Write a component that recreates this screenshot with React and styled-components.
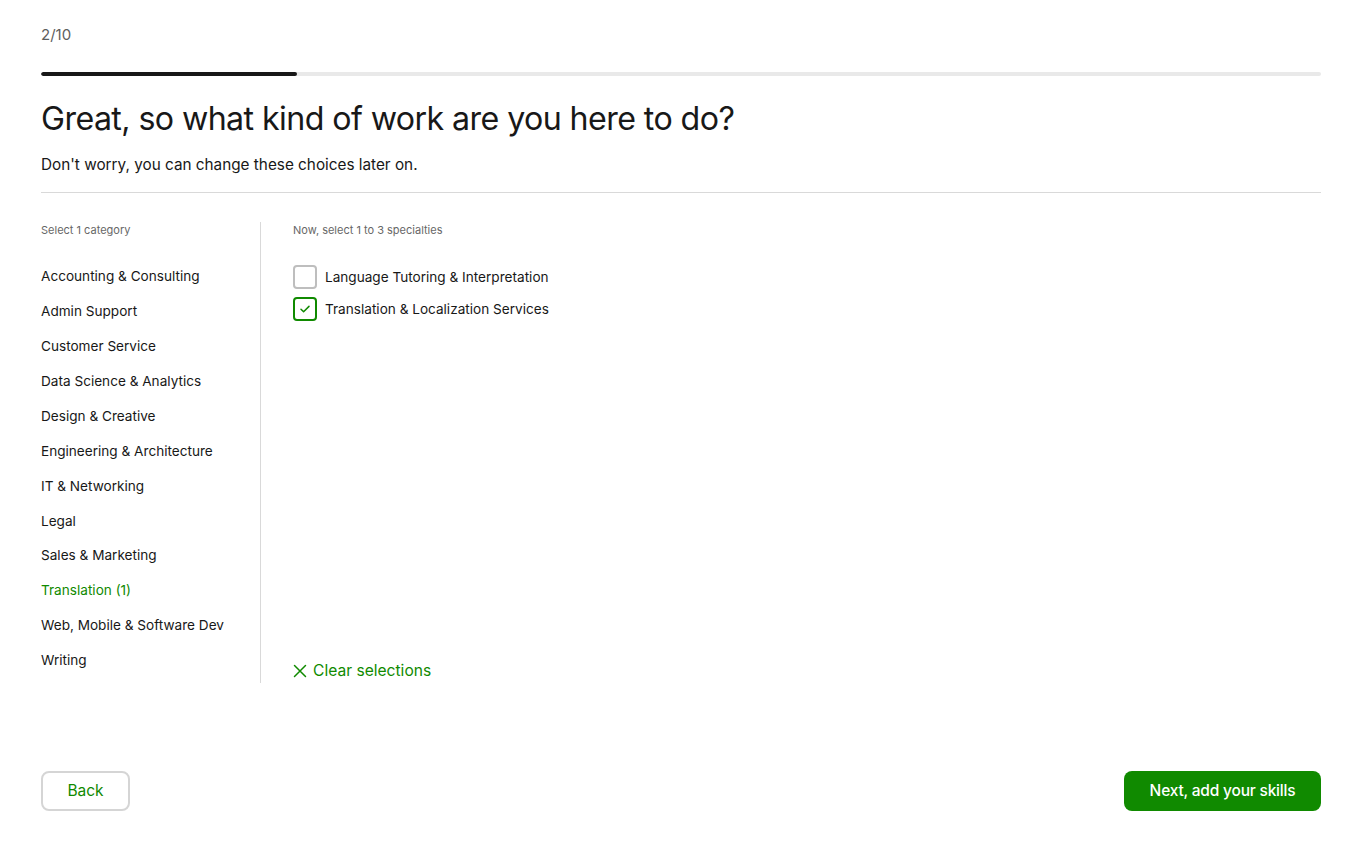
import React from 'react'
import styled, { createGlobalStyle } from 'styled-components'

const GlobalStyle = createGlobalStyle`
  body {
    margin: 0;
    background: #fff;
    font-family: Inter, "Noto Sans", sans-serif;
    color: #181818;
  }
`

const categorias = [
  'Accounting & Consulting',
  'Admin Support',
  'Customer Service',
  'Data Science & Analytics',
  'Design & Creative',
  'Engineering & Architecture',
  'IT & Networking',
  'Legal',
  'Sales & Marketing',
  'Translation (1)',
  'Web, Mobile & Software Dev',
  'Writing',
]

const especialidades = [
  { nome: 'Language Tutoring & Interpretation', marcado: false },
  { nome: 'Translation & Localization Services', marcado: true },
]

function App() {
  return (
    <Page>
      <GlobalStyle />
      <Step>2/10</Step>
      <Progress>
        <ProgressFill style={{ width: '20%' }} />
      </Progress>
      <Title>Great, so what kind of work are you here to do?</Title>
      <Subtitle>Don't worry, you can change these choices later on.</Subtitle>
      <Divider />

      <Columns>
        <LeftCol>
          <SmallLabel>Select 1 category</SmallLabel>
          <CategoryList>
            {categorias.map((c) => (
              <Category key={c} $active={c.startsWith('Translation')}>{c}</Category>
            ))}
          </CategoryList>
        </LeftCol>

        <RightCol>
          <SmallLabel>Now, select 1 to 3 specialties</SmallLabel>
          <SpecialtyList>
            {especialidades.map((e) => (
              <Specialty key={e.nome}>
                <Box $checked={e.marcado}>
                  {e.marcado && (
                    <svg width="12" height="12" viewBox="0 0 12 12" fill="none">
                      <path d="M2 6.3l2.6 2.5L10 3.4" stroke="#108a00" strokeWidth="1.5" strokeLinecap="round" strokeLinejoin="round" />
                    </svg>
                  )}
                </Box>
                {e.nome}
              </Specialty>
            ))}
          </SpecialtyList>
          <ClearLink>
            <svg width="14" height="14" viewBox="0 0 14 14" fill="none">
              <path d="M1.5 1.5l11 11M12.5 1.5l-11 11" stroke="#108a00" strokeWidth="1.5" strokeLinecap="round" />
            </svg>
            Clear selections
          </ClearLink>
        </RightCol>
      </Columns>

      <Footer>
        <BackButton>Back</BackButton>
        <NextButton>Next, add your skills</NextButton>
      </Footer>
    </Page>
  )
}

export default App

const Page = styled.div`
  padding: 25px 38px 0 41px;
`

const Step = styled.div`
  font-size: 15px;
  color: #5e5e5e;
  line-height: 20px;
`

const Progress = styled.div`
  margin-top: 27px;
  height: 4px;
  border-radius: 2px;
  background: #e9e9e9;
  overflow: hidden;
`

const ProgressFill = styled.div`
  height: 100%;
  background: #181818;
  border-radius: 2px;
`

const Title = styled.h1`
  margin: 21px 0 0;
  font-size: 32.2px;
  font-weight: 400;
  letter-spacing: -0.6px;
  line-height: 44px;
`

const Subtitle = styled.p`
  margin: 13px 0 0;
  font-size: 15.3px;
  line-height: 22px;
`

const Divider = styled.div`
  margin-top: 16px;
  height: 1px;
  background: #d9d9d9;
`

const Columns = styled.div`
  display: flex;
  margin-top: 29px;
`

const LeftCol = styled.div`
  width: 219px;
  flex-shrink: 0;
  border-right: 1px solid #d9d9d9;
  display: flex;
  flex-direction: column;
`

const SmallLabel = styled.div`
  font-size: 11px;
  color: #676767;
  line-height: 16px;
`

const CategoryList = styled.div`
  display: flex;
  flex-direction: column;
  margin-top: 21px;
  padding-bottom: 5px;
`

const Category = styled.div`
  font-size: 13.6px;
  line-height: 20px;
  padding: 7.45px 0;
  color: ${(p) => (p.$active ? '#108a00' : '#181818')};
  cursor: pointer;
`

const RightCol = styled.div`
  flex: 1;
  padding-left: 32px;
  display: flex;
  flex-direction: column;
`

const SpecialtyList = styled.div`
  display: flex;
  flex-direction: column;
  gap: 8px;
  margin-top: 27px;
`

const Specialty = styled.label`
  display: flex;
  align-items: center;
  gap: 8px;
  font-size: 13.6px;
  line-height: 24px;
  cursor: pointer;
`

const Box = styled.span`
  box-sizing: border-box;
  width: 24px;
  height: 24px;
  border-radius: 4px;
  border: 2px solid ${(p) => (p.$checked ? '#108a00' : '#bebebe')};
  display: flex;
  align-items: center;
  justify-content: center;
`

const ClearLink = styled.div`
  margin-top: auto;
  margin-bottom: 2px;
  display: flex;
  align-items: center;
  gap: 6px;
  color: #108a00;
  font-size: 15.6px;
  line-height: 20px;
  cursor: pointer;
`

const Footer = styled.div`
  display: flex;
  justify-content: space-between;
  margin-top: 88px;
`

const BackButton = styled.button`
  box-sizing: border-box;
  width: 89px;
  height: 40px;
  border: 2px solid #d5d5d5;
  border-radius: 8px;
  background: #fff;
  color: #108a00;
  font-family: Inter, "Noto Sans", sans-serif;
  font-size: 15.5px;
  cursor: pointer;
`

const NextButton = styled.button`
  box-sizing: border-box;
  width: 197px;
  height: 40px;
  border: none;
  border-radius: 8px;
  background: #108a00;
  color: #fff;
  font-family: Inter, "Noto Sans", sans-serif;
  font-size: 15.5px;
  font-weight: 500;
  letter-spacing: -0.2px;
  cursor: pointer;
`
